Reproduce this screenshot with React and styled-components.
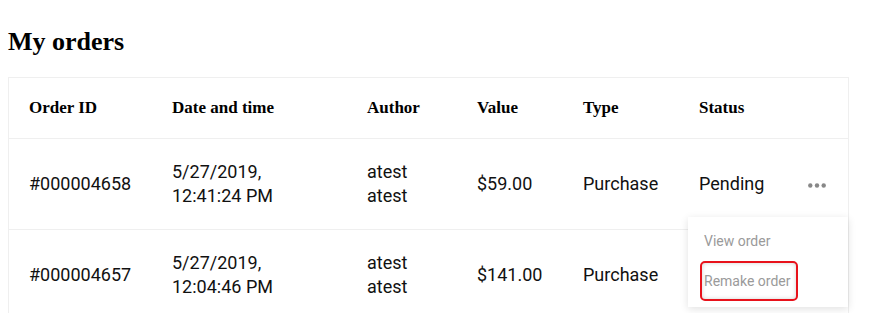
import styled, { createGlobalStyle } from "styled-components";

const GlobalStyle = createGlobalStyle`
  body {
    margin: 0;
    background: #fff;
    font-family: Roboto, "Liberation Sans", sans-serif;
    color: #111;
  }
`;

const Page = styled.div`
  padding: 0 20px 0 8px;
`;

const Heading = styled.h1`
  margin: 0;
  padding-top: 27px;
  height: 77px;
  box-sizing: border-box;
  font-family: "Liberation Serif", "DejaVu Serif", serif;
  font-weight: 700;
  font-size: 26px;
  line-height: 30px;
  color: #000;
`;

const Table = styled.div`
  border: 1px solid #efefef;
  border-bottom: none;
`;

const columns = "143px 195px 110px 106px 116px 109px 1fr";

const HeadRow = styled.div`
  display: grid;
  grid-template-columns: ${columns};
  align-items: center;
  height: 60px;
  padding-left: 20px;
  border-bottom: 1px solid #efefef;
`;

const HeadCell = styled.div`
  font-family: "Liberation Serif", "DejaVu Serif", serif;
  font-weight: 700;
  font-size: 17px;
  color: #000;
`;

const Row = styled.div`
  position: relative;
  display: grid;
  grid-template-columns: ${columns};
  align-items: center;
  height: 90px;
  padding-left: 20px;
  border-bottom: 1px solid #efefef;
`;

const Cell = styled.div`
  font-size: 18px;
  line-height: 24px;
  color: #111;
`;

const Dots = styled.button`
  display: flex;
  align-items: center;
  width: 18px;
  height: 10px;
  padding: 0;
  margin-top: 2px;
  border: none;
  background: none;
  cursor: pointer;
`;

const Menu = styled.div`
  position: absolute;
  top: 78px;
  right: 0;
  z-index: 2;
  width: 160px;
  box-sizing: border-box;
  padding: 4px 0 6px 12px;
  background: #fff;
  box-shadow: 0 2px 8px rgba(0, 0, 0, 0.12);
  display: flex;
  flex-direction: column;
  align-items: flex-start;
`;

const MenuItem = styled.button`
  height: 40px;
  padding: 0 6px 0 2px;
  border: 2px solid ${(p) => (p.$focused ? "#e8121b" : "transparent")};
  border-radius: 5px;
  box-shadow: ${(p) => (p.$focused ? "inset 0 0 4px rgba(0,0,0,0.18)" : "none")};
  background: none;
  font-family: Roboto, "Liberation Sans", sans-serif;
  font-size: 14px;
  color: #9a9a9a;
  text-align: left;
  cursor: pointer;
`;

const orders = [
  { id: "#000004658", date: "5/27/2019,", time: "12:41:24 PM", value: "$59.00", open: true },
  { id: "#000004657", date: "5/27/2019,", time: "12:04:46 PM", value: "$141.00" },
];

const DotsIcon = () => (
  <svg width="18" height="5" viewBox="0 0 18 5">
    <circle cx="2.3" cy="2.5" r="2.2" fill="#888" />
    <circle cx="9" cy="2.5" r="2.2" fill="#888" />
    <circle cx="15.7" cy="2.5" r="2.2" fill="#888" />
  </svg>
);

export default function App() {
  return (
    <Page>
      <GlobalStyle />
      <Heading>My orders</Heading>
      <Table>
        <HeadRow>
          <HeadCell>Order ID</HeadCell>
          <HeadCell>Date and time</HeadCell>
          <HeadCell>Author</HeadCell>
          <HeadCell>Value</HeadCell>
          <HeadCell>Type</HeadCell>
          <HeadCell>Status</HeadCell>
          <div />
        </HeadRow>
        {orders.map((o) => (
          <Row key={o.id}>
            <Cell>{o.id}</Cell>
            <Cell>
              {o.date}
              <br />
              {o.time}
            </Cell>
            <Cell>
              atest
              <br />
              atest
            </Cell>
            <Cell>{o.value}</Cell>
            <Cell>Purchase</Cell>
            <Cell>{o.open ? "Pending" : ""}</Cell>
            <div>{o.open && <Dots aria-label="Actions"><DotsIcon /></Dots>}</div>
            {o.open && (
              <Menu>
                <MenuItem>View order</MenuItem>
                <MenuItem $focused>Remake order</MenuItem>
              </Menu>
            )}
          </Row>
        ))}
      </Table>
    </Page>
  );
}
